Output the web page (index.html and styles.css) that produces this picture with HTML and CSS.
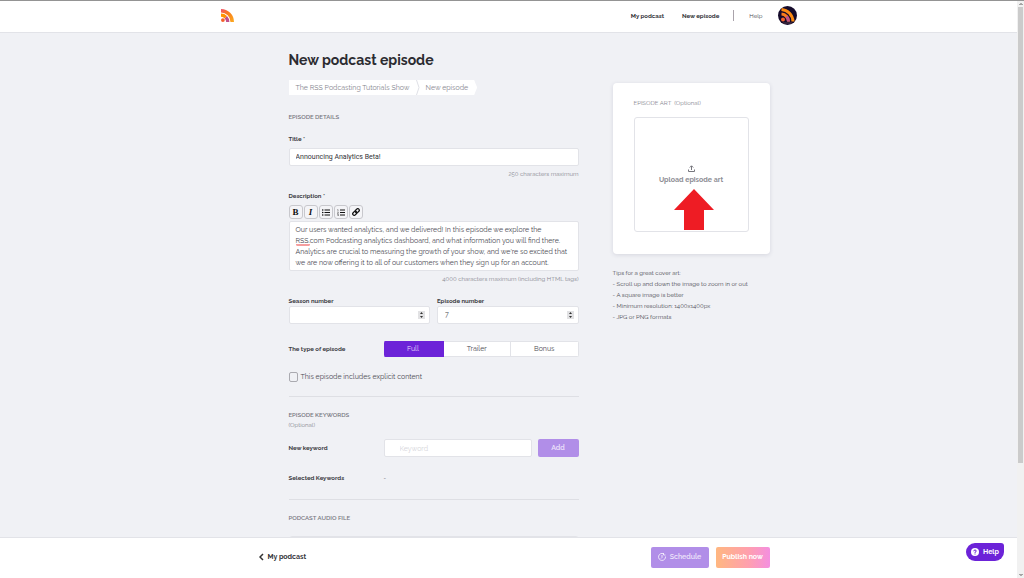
FILE: index.html
```html
<!DOCTYPE html>
<html lang="en">
<head>
  <meta charset="UTF-8" />
  <meta name="viewport" content="width=device-width, initial-scale=1.0"/>
  <title>New podcast episode</title>
  <link rel="stylesheet" href="styles.css">
</head>
<body>

  <div class="app">
    <header class="header">
      <div class="container header-inner">
        <a href="#" class="logo" aria-label="Home">
          <svg viewBox="0 0 24 24" width="13" height="13">
            <defs>
              <linearGradient id="rss" x1="0" y1="0" x2="1" y2="1">
                <stop offset="0" stop-color="#f0506e"/>
                <stop offset="0.4" stop-color="#f97b1c"/>
                <stop offset="1" stop-color="#fbab20"/>
              </linearGradient>
            </defs>
            <path d="M0 0A24 24 0 0 1 24 24H17.500A17.500 17.500 0 0 0 0 6.500Z" fill="url(#rss)"/>
            <path d="M0 8.500A15.500 15.500 0 0 1 11 13L7 17.500A9.500 9.500 0 0 0 0 14.500Z" fill="#ff9200"/>
            <path d="M11 13A15.500 15.500 0 0 1 15.500 24H9.500A9.500 9.500 0 0 0 7 17.500Z" fill="#c0508c"/>
            <circle cx="3.500" cy="20.500" r="3.500" fill="#f4602a"/>
          </svg>
        </a>
        <nav class="nav">
          <a href="#" class="strong">My podcast</a>
          <a href="#" class="strong">New episode</a>
          <span class="divider"></span>
          <a href="#">Help</a>
          <a href="#" class="avatar" aria-label="Account">
            <svg viewBox="0 0 38 38" width="19" height="19">
              <circle cx="19" cy="19" r="19" fill="#150b2b"/>
              <g fill="none" stroke-width="6">
                <path d="M7 7A25 25 0 0 1 30 31" stroke="#fb8a12"/>
                <path d="M7 16A15 15 0 0 1 21 31" stroke="#f97b1c"/>
                <path d="M17 21Q21 25 21 31" stroke="#c0508c"/>
              </g>
              <circle cx="10" cy="27" r="4" fill="#f4602a"/>
              <path d="M10 34H28" stroke="#9a6a60"/>
            </svg>
          </a>
        </nav>
      </div>
    </header>

    <main class="main">
      <div class="container content">
        <form class="form" onsubmit="return false">
          <h1>New podcast episode</h1>

          <nav class="breadcrumb" aria-label="Breadcrumb">
            <a href="#">The RSS Podcasting Tutorials Show</a>
            <svg viewBox="0 0 4 15" width="4" height="15"><path d="M0.500 0L3 7.500L0.500 15" fill="none" stroke="#dfe0e6"/></svg>
            <a href="#">New episode</a>
          </nav>

          <h2>EPISODE DETAILS</h2>

          <div class="field">
            <label for="title">Title *</label>
            <input type="text" id="title" class="box" value="Announcing Analytics Beta!">
            <p class="hint">250 characters maximum</p>
          </div>

          <div class="field">
            <label for="description">Description *</label>
            <div class="toolbar">
              <button type="button" class="tool serif">B</button>
              <button type="button" class="tool serif italic">I</button>
              <button type="button" class="tool" aria-label="Bulleted list">
                <svg viewBox="0 0 16 14" width="8" height="7"><path d="M5 2H16M5 7H16M5 12H16" stroke="#111" stroke-width="2"/><circle cx="1.500" cy="2" r="1.500"/><circle cx="1.500" cy="7" r="1.500"/><circle cx="1.500" cy="12" r="1.500"/></svg>
              </button>
              <button type="button" class="tool" aria-label="Numbered list">
                <svg viewBox="0 0 16 14" width="8" height="7"><path d="M6 2H16M6 7H16M6 12H16" stroke="#111" stroke-width="2"/><path d="M1 1H2V4M0.500 6H3L1 9H3M0.500 11H3V13.500H0.500" fill="none" stroke="#333"/></svg>
              </button>
              <button type="button" class="tool" aria-label="Link">
                <svg viewBox="0 0 16 16" width="8" height="8"><g fill="none" stroke="#111" stroke-width="2.500" transform="rotate(-45 8 8)"><rect x="0" y="5" width="9" height="6" rx="3"/><rect x="7" y="5" width="9" height="6" rx="3"/></g></svg>
              </button>
            </div>
            <div class="editor">
              <textarea id="description" class="box" spellcheck="false">Our users wanted analytics, and we delivered! In this episode we explore the
RSS.com Podcasting analytics dashboard, and what information you will find there.
Analytics are crucial to measuring the growth of your show, and we're so excited that
we are now offering it to all of our customers when they sign up for an account.</textarea>
              <svg class="squiggle" viewBox="0 0 14 2" width="14" height="2"><path d="M0 1.500L1 0.500L2 1.500L3 0.500L4 1.500L5 0.500L6 1.500L7 0.500L8 1.500L9 0.500L10 1.500L11 0.500L12 1.500L13 0.500L14 1.500" fill="none" stroke="#e82020"/></svg>
            </div>
            <p class="hint">4000 characters maximum (including HTML tags)</p>
          </div>

          <div class="numbers">
            <div>
              <label for="season">Season number</label>
              <div class="box number">
                <input type="number" id="season">
                <svg viewBox="0 0 7 8" width="7" height="8"><path d="M0 0H7V8H0Z" fill="#e2e2e4"/><path d="M2 3L3.500 1L5 3ZM2 5H5L3.500 7Z" fill="#333"/></svg>
              </div>
            </div>
            <div>
              <label for="episode">Episode number</label>
              <div class="box number">
                <input type="number" id="episode" value="7">
                <svg viewBox="0 0 7 8" width="7" height="8"><path d="M0 0H7V8H0Z" fill="#e2e2e4"/><path d="M2 3L3.500 1L5 3ZM2 5H5L3.500 7Z" fill="#333"/></svg>
              </div>
            </div>
          </div>

          <div class="row types" role="radiogroup" aria-labelledby="type-label">
            <span class="label" id="type-label">The type of episode</span>
            <div class="segments">
              <label><input type="radio" name="type" checked><span>Full</span></label>
              <label><input type="radio" name="type"><span>Trailer</span></label>
              <label><input type="radio" name="type"><span>Bonus</span></label>
            </div>
          </div>

          <label class="explicit"><input type="checkbox">This episode includes explicit content</label>

          <hr>

          <h2>EPISODE KEYWORDS</h2>
          <p class="optional">(Optional)</p>

          <div class="row keyword">
            <label for="keyword">New keyword</label>
            <input type="text" id="keyword" class="box" placeholder="Keyword">
            <button type="button" class="btn purple">Add</button>
          </div>

          <div class="row selected">
            <span class="label">Selected Keywords</span>
            <span>-</span>
          </div>

          <hr>

          <h2>PODCAST AUDIO FILE</h2>
          <div class="audio"></div>
        </form>

        <aside class="side">
          <div class="card">
            <p>EPISODE ART &nbsp;(Optional)</p>
            <button type="button" class="upload">
              <svg viewBox="0 0 14 14" width="7" height="7"><path d="M7 10V2M3.500 5L7 1.500L10.500 5M1 9V13H13V9" fill="none" stroke="#77777e" stroke-width="2"/></svg>
              Upload episode art
            </button>
            <svg class="arrow" viewBox="0 0 40 41" width="40" height="41"><path d="M20 0L40 21H30V41H10V21H0Z" fill="#ee1c24"/></svg>
          </div>
          <div class="tips">
            <p>Tips for a great cover art:</p>
            <p>- Scroll up and down the image to zoom in or out</p>
            <p>- A square image is better</p>
            <p>- Minimum resolution: 1400x1400px</p>
            <p>- JPG or PNG formats</p>
          </div>
        </aside>
      </div>
    </main>

    <footer class="footer">
      <div class="container footer-inner">
        <a href="#" class="back">
          <svg viewBox="0 0 5 8" width="5" height="8"><path d="M4 1L1 4L4 7" fill="none" stroke="#333" stroke-width="1.500"/></svg>
          My podcast
        </a>
        <div class="actions">
          <button type="button" class="btn purple schedule">
            <svg viewBox="0 0 16 16" width="8" height="8"><path d="M11 1.500A7 7 0 1 0 15 7M11 0V4H15M8 4V9L6 11" fill="none" stroke="#fff" stroke-width="1.500"/></svg>
            Schedule
          </button>
          <button type="button" class="btn publish">Publish now</button>
        </div>
      </div>
      <button type="button" class="help">
        <svg viewBox="0 0 16 16" width="8" height="8"><circle cx="8" cy="8" r="8" fill="#fff"/><path d="M5.500 6.500Q5.500 4 8 4T10.500 6.200Q10.500 7.500 8 8.500V10M8 11V13" fill="none" stroke="#6c23d8" stroke-width="2"/></svg>
        Help
      </button>
    </footer>
  </div>

  <div class="scrollbar">
    <svg viewBox="0 0 6 6" width="6" height="6"><path d="M1.500 4L3 2.500L4.500 4" fill="none" stroke="#555"/></svg>
    <div class="thumb"></div>
    <svg viewBox="0 0 6 6" width="6" height="6"><path d="M1.500 2L3 3.500L4.500 2" fill="none" stroke="#555"/></svg>
  </div>

</body>
</html>
```
FILE: styles.css
```css
:root {
  --bg: #f0f1f5;
  --line: #e2e3e8;
  --text: #484850;
  --dark: #333338;
  --muted: #85858e;
  --purple: #6c23d8;
}

* {
  box-sizing: border-box;
}

body {
  margin: 0;
  height: 100vh;
  display: flex;
  overflow: hidden;
  border-top: 1px solid #949494;
  background: var(--bg);
  color: var(--text);
  font-family: Raleway, "Open Sans", sans-serif;
  font-size: 6px;
  line-height: 10px;
}

h1, h2, p {
  margin: 0;
}

a {
  color: inherit;
  text-decoration: none;
}

button, input, textarea {
  font: inherit;
  color: inherit;
  margin: 0;
}

svg {
  display: block;
  flex: none;
}

.app {
  flex: 1;
  display: flex;
  flex-direction: column;
}

.container {
  width: 100%;
  max-width: 576px;
  margin: 0 auto;
}

/* header */
.header {
  background: #fff;
  border-bottom: 1px solid var(--line);
}

.header-inner {
  display: flex;
  align-items: center;
  justify-content: space-between;
  height: 31px;
  padding-bottom: 2px;
}

.nav {
  display: flex;
  align-items: center;
}

.nav .strong {
  margin-right: 18px;
  font-weight: 700;
  color: var(--dark);
}

.divider {
  width: 1px;
  height: 11px;
  margin-right: 15px;
  margin-left: -4px;
  background: #aaa3ab;
}

.avatar {
  margin-left: 15px;
}

/* form */
.main {
  flex: 1;
  min-height: 0;
  overflow: hidden;
}

.content {
  display: flex;
  gap: 34px;
  padding: 17px 27px 0 68px;
}

.form {
  flex: 1;
  min-width: 0;
}

h1 {
  font-size: 14px;
  line-height: 20px;
  color: #2c2c31;
}

.breadcrumb {
  display: flex;
  align-items: center;
  width: max-content;
  height: 15px;
  margin: 10px 0 17px;
  padding: 0 9px 0 7px;
  gap: 6px;
  background: #fff;
  color: var(--muted);
  font-size: 7px;
  clip-path: polygon(0 0, calc(100% - 3px) 0, 100% 50%, calc(100% - 3px) 100%, 0 100%);
}

h2 {
  font-size: 6px;
  font-weight: 600;
  color: #77777f;
}

label, .label {
  display: block;
  font-weight: 700;
  color: #3d3d44;
}

.field {
  margin-top: 12px;
}

.box {
  display: block;
  width: 100%;
  height: 18px;
  padding: 0 7px;
  border: 1px solid var(--line);
  border-radius: 2px;
  background: #fff;
  font-size: 7px;
}

.field > .box {
  margin-top: 4px;
  padding: 0 6px;
  font-family: Roboto, sans-serif;
  color: var(--dark);
}

.hint {
  margin-top: 3px;
  text-align: right;
  color: var(--muted);
}

.toolbar {
  display: flex;
  gap: 1px;
  margin: 4px 0 2px;
}

.tool {
  display: flex;
  align-items: center;
  justify-content: center;
  width: 14px;
  height: 14px;
  padding: 0;
  border: 1px solid #c8c8cd;
  border-radius: 3px;
  background: #f4f4f7;
  color: #111;
}

.serif {
  font-family: "Liberation Serif", serif;
  font-size: 9px;
  font-weight: 700;
}

.italic {
  font-style: italic;
}

.editor {
  position: relative;
}

.editor textarea {
  height: 50px;
  padding: 2px 6px;
  line-height: 11px;
  resize: none;
  overflow: hidden;
}

.squiggle {
  position: absolute;
  left: 7px;
  top: 23px;
}

.numbers {
  display: grid;
  grid-template-columns: 1fr 1fr;
  gap: 7px;
  margin-top: 12px;
}

.number {
  display: flex;
  align-items: center;
  padding-right: 4px;
}

.number input {
  flex: 1;
  min-width: 0;
  padding: 0;
  border: 0;
  background: none;
  appearance: textfield;
}

.number input::-webkit-inner-spin-button {
  display: none;
}

.row {
  display: grid;
  grid-template-columns: 95px 1fr;
  align-items: center;
}

.types {
  margin-top: 17px;
}

.segments {
  display: grid;
  grid-template-columns: 60px 1fr 1fr;
  height: 16px;
  border-radius: 2px;
  overflow: hidden;
}

.segments label {
  position: relative;
  display: flex;
  align-items: center;
  justify-content: center;
  border: 1px solid var(--line);
  border-left: 0;
  background: #fff;
  color: var(--text);
  font-size: 7px;
  font-weight: 400;
}

.segments input {
  position: absolute;
  opacity: 0;
}

.segments label:has(:checked) {
  border-color: var(--purple);
  background: var(--purple);
  color: #e6d9fa;
}

.explicit {
  display: flex;
  align-items: center;
  gap: 3px;
  margin: 15px 0 14px;
  color: var(--text);
  font-size: 7px;
  font-weight: 400;
}

.explicit input {
  appearance: none;
  width: 9px;
  height: 10px;
  border: 1px solid #aaaab0;
  border-radius: 2px;
}

hr {
  height: 1px;
  margin: 0 0 13px;
  border: 0;
  background: #dedfe4;
}

.optional {
  color: var(--muted);
}

.keyword {
  grid-template-columns: 95px 1fr 41px;
  margin: 9px 0 16px;
}

.keyword .box {
  width: auto;
  margin-right: 6px;
  padding: 0 15px;
}

.keyword .box::placeholder {
  color: #d4d4d9;
}

.selected {
  margin-bottom: 16px;
}

.btn {
  display: flex;
  align-items: center;
  justify-content: center;
  height: 18px;
  padding: 0;
  border: 0;
  border-radius: 2px;
  color: #fff;
  font-size: 7px;
  font-weight: 600;
}

.purple {
  background: #b18ee8;
  color: #eee4fb;
}

.audio {
  height: 40px;
  margin-top: 13px;
  border: 1px solid var(--line);
  border-radius: 3px;
  background: #fff;
}

/* cover art */
.side {
  width: 157px;
  margin-top: 33px;
}

.card {
  position: relative;
  padding: 15px 21px 22px;
  border-radius: 4px;
  background: #fff;
  box-shadow: 0 1px 4px rgba(60, 60, 90, 0.14);
  color: var(--muted);
}

.upload {
  display: flex;
  flex-direction: column;
  align-items: center;
  justify-content: center;
  gap: 3px;
  width: 100%;
  aspect-ratio: 1;
  margin-top: 9px;
  padding: 1px 0 0;
  border: 1px solid var(--line);
  border-radius: 3px;
  background: #fff;
  color: #8c8c93;
  font-size: 7px;
  font-weight: 700;
}

.arrow {
  position: absolute;
  left: 61px;
  bottom: 24px;
}

.tips {
  margin-top: 13px;
  line-height: 11px;
}

/* footer */
.footer {
  position: relative;
  border-top: 1px solid var(--line);
  background: #fff;
}

.footer-inner {
  display: flex;
  align-items: center;
  justify-content: space-between;
  height: 40px;
  padding: 0 27px 2px 38px;
}

.back {
  display: flex;
  align-items: center;
  gap: 4px;
  color: var(--dark);
  font-size: 7px;
  font-weight: 700;
}

.actions {
  display: flex;
  gap: 7px;
}

.actions .btn {
  width: 58px;
  height: 21px;
  gap: 4px;
}

.actions .publish {
  width: 54px;
  background: linear-gradient(90deg, #ffb780, #ff9fae 60%, #f48fe0);
  font-weight: 700;
}

.help {
  position: absolute;
  right: 13px;
  top: 5px;
  display: flex;
  align-items: center;
  justify-content: center;
  gap: 4px;
  width: 38px;
  height: 18px;
  padding: 0;
  border: 0;
  border-radius: 9px 3px 9px 9px;
  background: var(--purple);
  color: #fff;
  font-size: 7px;
  font-weight: 700;
}

.scrollbar {
  display: flex;
  flex-direction: column;
  align-items: center;
  width: 7px;
  background: #f1f1f1;
}

.thumb {
  width: 5px;
  height: 79%;
  margin-bottom: auto;
  background: #cbcbcb;
}
```
